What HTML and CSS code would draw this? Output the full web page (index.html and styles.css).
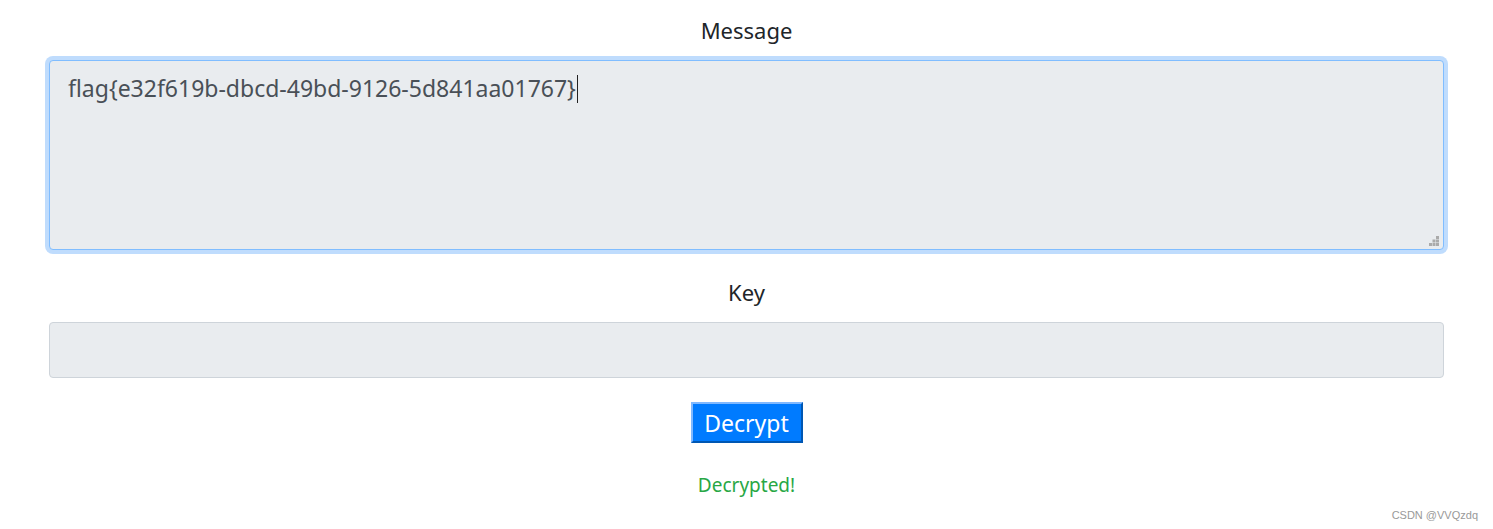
FILE: index.html
```html
<html lang="en">
<head>
<meta charset="UTF-8">
<meta name="viewport" content="width=device-width, initial-scale=1.0">
<title>Decrypt</title>
<link rel="stylesheet" href="styles.css">
</head>
<body>

<div class="container">
  <div class="form-group">
    <label class="form-label">Message</label>
    <div class="message-box focused">
      <span class="message-text">flag{e32f619b-dbcd-49bd-9126-5d841aa01767}</span><span class="caret"></span>
      <svg class="grip" width="10" height="10" viewBox="0 0 10 10">
        <rect x="7" y="0" width="3" height="3" fill="#aaa"/>
        <rect x="3.5" y="3.5" width="3" height="3" fill="#aaa"/>
        <rect x="7" y="3.5" width="3" height="3" fill="#aaa"/>
        <rect x="0" y="7" width="3" height="3" fill="#aaa"/>
        <rect x="3.5" y="7" width="3" height="3" fill="#aaa"/>
        <rect x="7" y="7" width="3" height="3" fill="#aaa"/>
      </svg>
    </div>
  </div>

  <div class="form-group">
    <label class="form-label">Key</label>
    <div class="key-box"></div>
  </div>

  <div class="actions">
    <button class="decrypt-btn">Decrypt</button>
  </div>

  <p class="status">Decrypted!</p>
</div>

<div class="watermark">CSDN @VVQzdq</div>

</body>
</html>
```

FILE: styles.css
```css
body {
  font-family: 'Noto Sans', 'Open Sans', sans-serif;
  margin: 0;
  padding: 0;
  background-color: #fff;
  color: #212529;
}
.container {
  margin: 0 49px;
  padding-top: 14px;
}
.form-group {
  display: flex;
  flex-direction: column;
  align-items: stretch;
}
.form-label {
  text-align: center;
  font-size: 22px;
  line-height: 32px;
  margin-bottom: 14px;
}
.message-box {
  position: relative;
  padding: 12px 18px;
  box-sizing: border-box;
  height: 190px;
  background-color: #e9ecef;
  border: 1px solid #80bdff;
  border-radius: 4px;
  box-shadow: 0 0 0 4px #bfdcfd;
  font-size: 23px;
  line-height: 30px;
  color: #495057;
  display: flex;
  align-items: flex-start;
}
.caret {
  display: inline-block;
  width: 1px;
  height: 28px;
  margin-top: 2px;
  margin-left: 1px;
  background-color: #222;
}
.grip {
  position: absolute;
  right: 4px;
  bottom: 3px;
}
.form-group + .form-group {
  margin-top: 26px;
}
.key-box {
  height: 56px;
  box-sizing: border-box;
  background-color: #e9ecef;
  border: 1px solid #ced4da;
  border-radius: 4px;
}
.actions {
  display: flex;
  justify-content: center;
  margin-top: 24px;
}
.decrypt-btn {
  width: 112px;
  height: 41px;
  font-family: inherit;
  font-size: 23px;
  color: #fff;
  background-color: #007bff;
  border: 2px solid;
  border-color: #7fb8ff #0057b3 #0057b3 #7fb8ff;
  padding: 0;
  cursor: pointer;
}
.status {
  text-align: center;
  color: #28a745;
  font-size: 19px;
  margin: 29px 0 0;
}
.watermark {
  position: absolute;
  right: 15px;
  bottom: 8px;
  font-family: 'Liberation Sans', Arial, sans-serif;
  font-size: 11px;
  color: #999;
}
```
